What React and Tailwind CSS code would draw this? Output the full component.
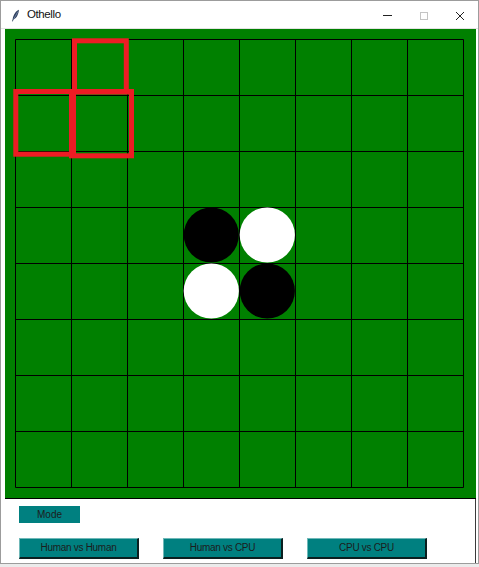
const CELL = 56;
const ORIGIN = 10;

const discs = [
  { row: 3, col: 3, color: "#000000" },
  { row: 3, col: 4, color: "#ffffff" },
  { row: 4, col: 3, color: "#ffffff" },
  { row: 4, col: 4, color: "#000000" },
];

const highlights = [
  { x: 69.5, y: 11.8, w: 51.8, h: 51.2 },
  { x: 10.8, y: 62.5, w: 57.7, h: 62.7 },
  { x: 66.5, y: 62.5, w: 60, h: 64.3 },
];

function Board() {
  const lines = Array.from({ length: 9 }, (_, i) => ORIGIN + 0.5 + i * CELL);
  const end = ORIGIN + 0.5 + 8 * CELL;

  return (
    <svg width="471" height="469" className="block">
      <rect x="0" y="0" width="471" height="469" fill="#008000" />
      {lines.map((p) => (
        <g key={p}>
          <line x1={p} y1={ORIGIN + 0.5} x2={p} y2={end} stroke="#000" strokeWidth="1" />
          <line x1={ORIGIN + 0.5} y1={p} x2={end} y2={p} stroke="#000" strokeWidth="1" />
        </g>
      ))}
      {discs.map((d) => (
        <circle
          key={`${d.row}-${d.col}`}
          cx={ORIGIN + d.col * CELL + 28.3}
          cy={ORIGIN + d.row * CELL + 28}
          r="27.6"
          fill={d.color}
        />
      ))}
      {highlights.map((h, i) => (
        <rect
          key={i}
          x={h.x}
          y={h.y}
          width={h.w}
          height={h.h}
          fill="none"
          stroke="#ed1c24"
          strokeWidth="5"
        />
      ))}
    </svg>
  );
}

function ModeButton({ label }) {
  return (
    <button className="w-[120px] h-[21px] bg-[#008080] border-t border-l border-t-[#6fb8b8] border-l-[#6fb8b8] border-b-2 border-r-2 border-b-[#0b1f1f] border-r-[#0b1f1f] text-[10px] tracking-[-0.3px] text-[#1c1c1c] leading-none font-['Liberation_Sans',Arial,sans-serif]">
      {label}
    </button>
  );
}

export default function App() {
  return (
    <div className="w-[479px] h-[567px] bg-[#ebebeb] overflow-hidden">
      <div className="h-[564px] border border-[#9c9c9c] bg-white flex flex-col">
        {/* title bar */}
        <div className="h-[28px] shrink-0 border-b border-[#e3e3e3] flex items-center">
          <svg width="9" height="13" viewBox="0 0 8 12" className="ml-[10px] mt-[2px]">
            <path d="M7.2 0.6 C4.6 1.6 2.2 4.6 1.4 9.2 L0.8 11.6 L1.6 11.4 L2.2 9.6 C5.2 8.2 6.8 4.6 7.2 0.6 Z" fill="#2f3f5c" />
            <path d="M6.2 2.4 L2.4 9.2" stroke="#8aa0c8" strokeWidth="0.6" />
          </svg>
          <span className="ml-[7px] mt-[1px] text-[11.5px] tracking-[-0.4px] text-[#111] font-['Liberation_Sans',Arial,sans-serif]">
            Othello
          </span>
          <div className="ml-auto flex h-full items-center">
            <div className="w-[37px] h-full flex items-center justify-center">
              <div className="w-[9px] h-px bg-[#222] mt-[2px]" />
            </div>
            <div className="w-[36px] h-full flex items-center justify-center">
              <div className="w-[8px] h-[8px] border border-[#c4c4c4] mt-[2px]" />
            </div>
            <div className="w-[36px] h-full flex items-center justify-center">
              <svg width="10" height="10" viewBox="0 0 10 10" className="mt-[2px]">
                <path d="M1 1 L9 9 M9 1 L1 9" stroke="#222" strokeWidth="1" />
              </svg>
            </div>
          </div>
        </div>

        {/* window body */}
        <div className="flex-1 flex flex-col pl-[4px]">
          <div className="w-[471px] h-[470px] border-b border-black">
            <Board />
          </div>
          <div className="w-[471px] flex-1 border-r border-[#3a3a3a] pl-[14px] pt-[7px] flex flex-col">
            <div className="w-[61px] h-[17px] bg-[#008080] flex items-center justify-center text-[10px] text-[#1c1c1c] font-['Liberation_Sans',Arial,sans-serif]">
              Mode
            </div>
            <div className="mt-[15px] flex gap-[24px]">
              <ModeButton label="Human vs Human" />
              <ModeButton label="Human vs CPU" />
              <ModeButton label="CPU vs CPU" />
            </div>
          </div>
        </div>
      </div>
    </div>
  );
}
